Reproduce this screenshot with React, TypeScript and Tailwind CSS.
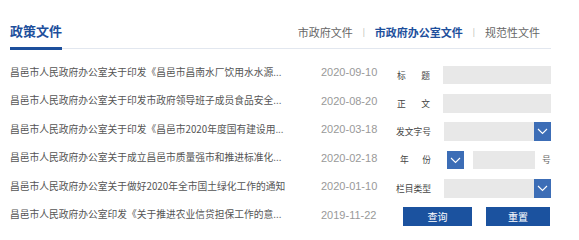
import React from 'react';

const rows = [
    { title: "昌邑市人民政府办公室关于印发《昌邑市昌南水厂饮用水水源...", date: "2020-09-10" },
    { title: "昌邑市人民政府办公室关于印发市政府领导班子成员食品安全...", date: "2020-08-20" },
    { title: "昌邑市人民政府办公室关于印发《昌邑市2020年度国有建设用...", date: "2020-03-18" },
    { title: "昌邑市人民政府办公室关于成立昌邑市质量强市和推进标准化...", date: "2020-02-18" },
    { title: "昌邑市人民政府办公室关于做好2020年全市国土绿化工作的通知", date: "2020-01-10" },
    { title: "昌邑市人民政府办公室印发《关于推进农业信贷担保工作的意...", date: "2019-11-22" },
];

const Chevron = () => (
    <svg width="11" height="7" viewBox="0 0 11 7" fill="none">
        <polyline points="1,1 5.5,5.5 10,1" stroke="white" strokeWidth="1.1" />
    </svg>
);

const SelectBtn = () => (
    <div className="w-[17px] h-full bg-[#3c6db6] flex items-center justify-center">
        <Chevron />
    </div>
);

const Label = ({ a, b }: { a: string; b?: string }) => (
    <div className={`w-[35px] shrink-0 flex whitespace-nowrap text-[8.75px] text-[#444] ${b ? 'justify-between px-px' : ''}`}>
        <span>{a}</span>
        {b && <span>{b}</span>}
    </div>
);

export default function App() {
    return (
        <div className="w-[579px] h-[240px] bg-white overflow-hidden font-['Noto_Sans_CJK_SC',sans-serif]">
            <div className="ml-[10px] w-[541px]">
                <div className="h-[49px] flex items-end justify-between border-b border-[#e2e7ef]">
                    <div className="text-[13px] leading-[16px] font-bold text-[#1d4f9c] pb-[8px] border-b-[3px] border-[#1d4f9c] -mb-[2px]">
                        政策文件
                    </div>
                    <div className="flex items-center gap-[10px] pb-[9px] pr-[11px] text-[11px] leading-[14px] text-[#666]">
                        <span>市政府文件</span>
                        <span className="text-[8px] text-[#aaa]">|</span>
                        <span className="font-bold text-[#1d4f9c]">市政府办公室文件</span>
                        <span className="text-[8px] text-[#aaa]">|</span>
                        <span>规范性文件</span>
                    </div>
                </div>

                <div className="flex">
                    <div className="w-[311px] shrink-0 pt-[9px]">
                        {rows.map(r => (
                            <div key={r.date} className="h-[28.5px] flex items-center text-[9.75px] text-[#555] whitespace-nowrap">
                                {r.title}
                            </div>
                        ))}
                    </div>
                    <div className="w-[65px] shrink-0 pt-[9px]">
                        {rows.map(r => (
                            <div key={r.date} className="h-[28.5px] flex items-center text-[11px] text-[#999] font-['Liberation_Sans',sans-serif]">
                                {r.date}
                            </div>
                        ))}
                    </div>
                    <div className="ml-[10px] shrink-0 pt-[12px] flex flex-col">
                        <div className="h-[28.3px] flex items-center">
                            <Label a="标" b="题" />
                            <div className="ml-[12px] w-[108px] h-[18px] bg-[#e8e8e8]" />
                        </div>
                        <div className="h-[28.3px] flex items-center">
                            <Label a="正" b="文" />
                            <div className="ml-[12px] w-[108px] h-[19px] bg-[#e8e8e8]" />
                        </div>
                        <div className="h-[28.3px] flex items-center">
                            <Label a="发文字号" />
                            <div className="ml-[13px] w-[107px] h-[19px] bg-[#e8e8e8] flex justify-end">
                                <SelectBtn />
                            </div>
                        </div>
                        <div className="h-[28.3px] flex items-center">
                            <div className="w-[35px] shrink-0 flex justify-between pl-[4px] text-[8.75px] text-[#444]">
                                <span>年</span>
                                <span>份</span>
                            </div>
                            <div className="ml-[16px] w-[18px] h-[18px]">
                                <SelectBtn />
                            </div>
                            <div className="ml-[8px] w-[62px] h-[18px] bg-[#e8e8e8]" />
                            <span className="ml-[7px] text-[8.75px] text-[#666]">号</span>
                        </div>
                        <div className="h-[28.3px] flex items-center">
                            <Label a="栏目类型" />
                            <div className="ml-[13px] w-[107px] h-[19px] bg-[#e8e8e8] flex justify-end">
                                <SelectBtn />
                            </div>
                        </div>
                        <div className="h-[28.3px] flex items-center">
                            <button className="ml-[7px] w-[69px] h-[19px] bg-[#1b529f] text-white text-[10px] leading-none">
                                查询
                            </button>
                            <button className="ml-[14px] w-[64px] h-[19px] bg-[#1b529f] text-white text-[10px] leading-none">
                                重置
                            </button>
                        </div>
                    </div>
                </div>
            </div>
        </div>
    );
}
